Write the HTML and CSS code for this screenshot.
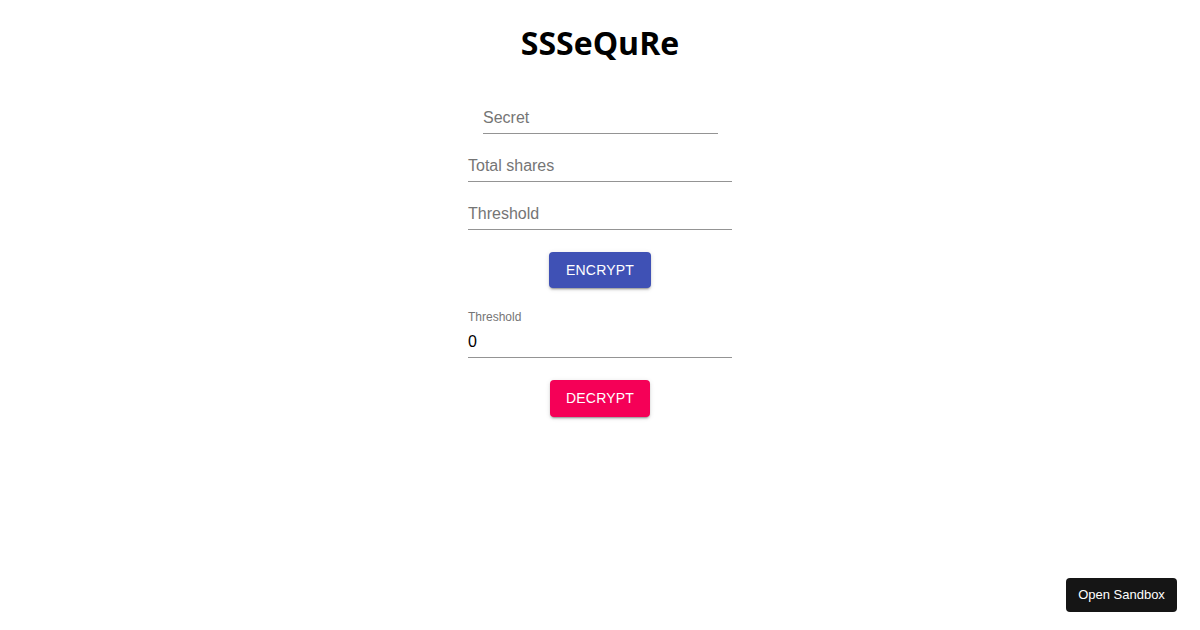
FILE: index.html
```html
<!DOCTYPE html>
<html>
<head>
<meta charset="utf-8">
<link rel="stylesheet" href="styles.css">
</head>
<body>
<div class="app">
  <h1 class="title">SSSeQuRe</h1>
  <div class="form">
    <div class="field field-secret">
      <label class="label">Secret</label>
      <div class="input"></div>
    </div>
    <div class="field">
      <label class="label">Total shares</label>
      <div class="input"></div>
    </div>
    <div class="field">
      <label class="label">Threshold</label>
      <div class="input"></div>
    </div>
    <button class="btn btn-primary">ENCRYPT</button>
    <div class="field field-filled">
      <label class="label label-shrink">Threshold</label>
      <div class="input">0</div>
    </div>
    <button class="btn btn-secondary">DECRYPT</button>
  </div>
</div>
<button class="sandbox">Open Sandbox</button>
</body>
</html>
```
FILE: styles.css
```css
html, body {
  margin: 0;
  padding: 0;
  background: #fff;
}
body {
  font-family: "Liberation Sans", Arial, sans-serif;
  width: 1200px;
  height: 630px;
  position: relative;
  overflow: hidden;
}
.app {
  display: flex;
  flex-direction: column;
  align-items: center;
}
.title {
  font-family: "Open Sans", sans-serif;
  font-weight: 700;
  font-size: 32px;
  margin: 21px 0 0;
  line-height: 44px;
  color: #000;
}
.form {
  display: flex;
  flex-direction: column;
  align-items: center;
  width: 264px;
  margin-top: 21px;
}
.field {
  position: relative;
  width: 264px;
  height: 48px;
  box-sizing: border-box;
  padding-top: 16px;
  border-bottom: 1px solid #949494;
}
.field-secret {
  width: 235px;
  align-self: flex-start;
  margin-left: 15px;
}
.label {
  position: absolute;
  left: 0;
  top: 22px;
  font-size: 16px;
  line-height: 19px;
  color: #757575;
}
.label-shrink {
  top: 0;
  font-size: 12px;
  line-height: 14px;
}
.input {
  height: 19px;
  padding: 6px 0 6px;
  font-size: 16px;
  line-height: 19px;
  color: #000;
}
.field-filled {
  margin-top: 1px;
}
.field-filled .input {
  padding-top: 6px;
}
.btn {
  font-family: "Liberation Sans", Arial, sans-serif;
  font-size: 14px;
  border: none;
  border-radius: 4px;
  color: #fff;
  height: 36px;
  padding: 0 16px;
  letter-spacing: 0.2px;
  box-shadow: 0 3px 1px -2px rgba(0,0,0,0.2), 0 2px 2px 0 rgba(0,0,0,0.14), 0 1px 5px 0 rgba(0,0,0,0.12);
}
.btn-primary {
  background: #3f51b5;
  width: 102px;
  margin-top: 22px;
  margin-bottom: 21px;
}
.btn-secondary {
  background: #f50057;
  width: 100px;
  height: 37px;
  padding-bottom: 1px;
  margin-top: 22px;
}
.sandbox {
  position: absolute;
  right: 23px;
  bottom: 18px;
  width: 111px;
  height: 34px;
  background: #151515;
  color: #fff;
  border: none;
  border-radius: 4px;
  font-family: "Liberation Sans", Arial, sans-serif;
  font-size: 13px;
  padding: 0 0 2px;
}
```
